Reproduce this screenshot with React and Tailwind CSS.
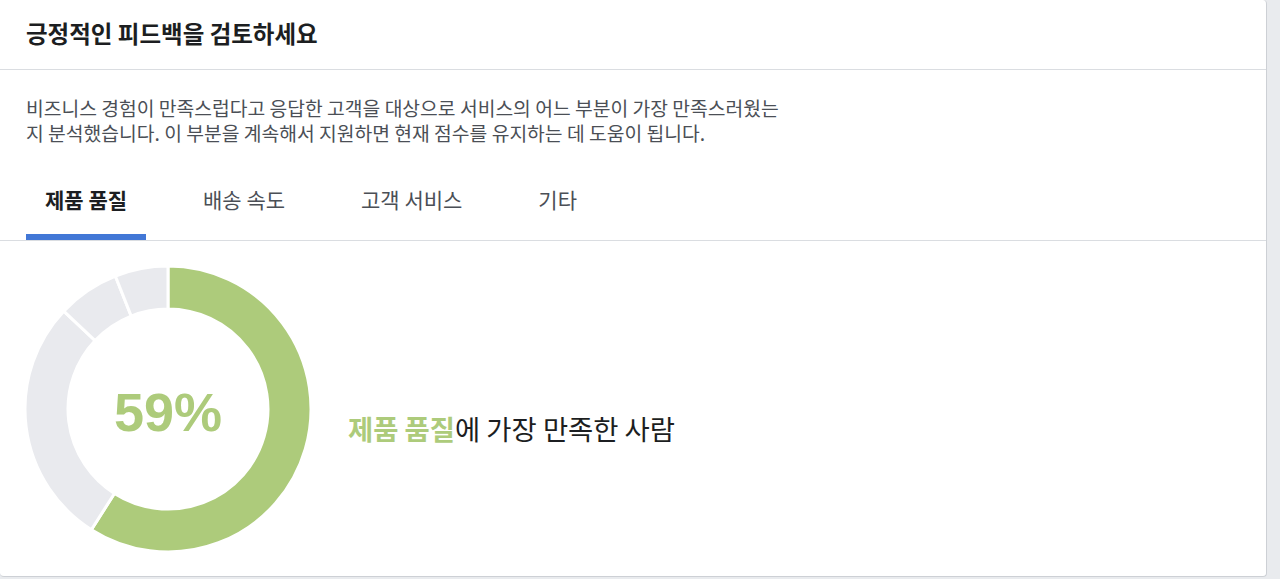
import { useState } from "react";

const tabs = ["제품 품질", "배송 속도", "고객 서비스", "기타"];

const segments = [
  { value: 59, color: "#adcb7b" },
  { value: 28, color: "#e9eaee" },
  { value: 7, color: "#e9eaee" },
  { value: 6, color: "#e9eaee" },
];

const polar = (cx, cy, r, pct) => {
  const a = (pct / 100) * Math.PI * 2 - Math.PI / 2;
  return [cx + r * Math.cos(a), cy + r * Math.sin(a)];
};

function Donut({ percent }) {
  const size = 286;
  const c = size / 2;
  const outer = 143;
  const inner = 100;
  let start = 0;

  const arcs = segments.map((s, i) => {
    const end = start + s.value;
    const large = s.value > 50 ? 1 : 0;
    const [x1, y1] = polar(c, c, outer, start);
    const [x2, y2] = polar(c, c, outer, end);
    const [x3, y3] = polar(c, c, inner, end);
    const [x4, y4] = polar(c, c, inner, start);
    const d = `M${x1} ${y1} A${outer} ${outer} 0 ${large} 1 ${x2} ${y2} L${x3} ${y3} A${inner} ${inner} 0 ${large} 0 ${x4} ${y4} Z`;
    start = end;
    return <path key={i} d={d} fill={s.color} stroke="#ffffff" strokeWidth="3" />;
  });

  return (
    <div className="relative h-[286px] w-[286px] shrink-0">
      <svg width={size} height={size} viewBox={`0 0 ${size} ${size}`}>
        {arcs}
      </svg>
      <div className="absolute inset-0 flex items-center justify-center pt-[6px]">
        <span className="font-['Liberation_Sans',Arial,sans-serif] text-[54px] font-bold leading-none text-[#adcb7b]">
          {percent}%
        </span>
      </div>
    </div>
  );
}

export default function App() {
  const [active, setActive] = useState(0);

  return (
    <div className="h-[579px] w-full overflow-hidden bg-[#e9ebee] font-['Noto_Sans_CJK_KR','Noto_Sans',sans-serif]">
      <div className="h-[577px] w-[1267px] rounded-b-[4px] rounded-tr-[4px] border-r border-b border-[#cdd0d5] bg-white">
        {/* Header */}
        <div className="flex h-[70px] items-center border-b border-[#dadde1] px-[26px] pb-[1px]">
          <h2 className="text-[23.5px] font-bold text-[#1c1e21]">긍정적인 피드백을 검토하세요</h2>
        </div>

        {/* Description */}
        <p className="w-[840px] px-[26px] pt-[26px] text-[19.3px] leading-[25px] text-[#4b4f56]">
          비즈니스 경험이 만족스럽다고 응답한 고객을 대상으로 서비스의 어느 부분이 가장 만족스러웠는
          <br />
          지 분석했습니다. 이 부분을 계속해서 지원하면 현재 점수를 유지하는 데 도움이 됩니다.
        </p>

        {/* Tabs */}
        <div className="mt-[40px] flex gap-[38px] border-b border-[#dadde1] px-[26px]">
          {tabs.map((t, i) => (
            <button
              key={t}
              type="button"
              onClick={() => setActive(i)}
              className={`border-b-[6px] px-[19px] pb-[21px] text-[21px] leading-[27px] ${
                active === i
                  ? "border-[#4277d6] font-bold text-[#1c1e21]"
                  : "border-transparent text-[#4b4f56]"
              }`}
            >
              {t}
            </button>
          ))}
        </div>

        {/* Chart */}
        <div className="flex items-center px-[25px] pt-[25px]">
          <Donut percent={59} />
          <p className="ml-[37px] mt-[40px] text-[27.4px] text-[#1c1e21]">
            <span className="font-bold text-[#adcb7b]">제품 품질</span>에 가장 만족한 사람
          </p>
        </div>
      </div>
    </div>
  );
}
